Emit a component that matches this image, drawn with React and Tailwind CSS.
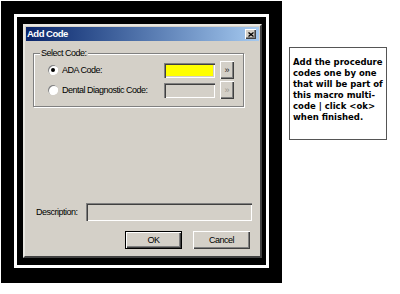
import React from 'react';

const sans = "font-['Liberation_Sans',Arial,sans-serif]";
const label = 'text-[9px] leading-[12px] tracking-[-0.5px] whitespace-nowrap text-black';

const raised = 'shadow-[inset_1px_1px_0_#ffffff,inset_-1px_-1px_0_#404040,inset_-2px_-2px_0_#808080]';
const sunken = 'shadow-[inset_1px_1px_0_#808080,inset_2px_2px_0_#404040,inset_-1px_-1px_0_#ffffff,inset_-2px_-2px_0_#d4d0c8]';

const Radio = ({ checked }) => (
  <span className="w-[10px] h-[10px] rounded-full bg-white shrink-0 flex items-center justify-center shadow-[inset_1px_1px_0_#808080,inset_-1px_-1px_0_#ffffff]">
    {checked && <span className="w-[4px] h-[4px] rounded-full bg-black" />}
  </span>
);

const CodeRow = ({ text, checked, yellow, disabled }) => (
  <div className="flex items-center h-[18px] pl-[14px]">
    <Radio checked={checked} />
    <span className={`ml-[4px] w-[102px] ${label}`}>{text}</span>
    <div className={`w-[51px] h-[15px] shrink-0 ${yellow ? 'bg-[#ffff00]' : 'bg-[#d4d0c8]'} ${sunken}`} />
    <button
      className={`ml-[5px] w-[14px] h-[18px] shrink-0 bg-[#d4d0c8] ${raised} flex items-center justify-center text-[9px] leading-none ${disabled ? 'text-[#9a978f]' : 'text-[#222]'}`}
    >
      »
    </button>
  </div>
);

export default function App() {
  return (
    <div className={`w-[400px] h-[294px] bg-white flex items-start pt-[1px] pl-[1px] overflow-hidden ${sans}`}>
      {/* picture frame */}
      <div className="w-[281px] h-[282px] bg-black pt-[13px] pl-[13px] pr-[13px] pb-[15px] shrink-0">
        <div className="h-full border-[3px] border-white pt-[7px] pl-[6px] pr-[4px] pb-[7px]">
          {/* dialog */}
          <div className="h-full flex flex-col bg-[#d4d0c8] border-2 border-t-[#e8e6e0] border-l-[#e8e6e0] border-r-[#404040] border-b-[#404040] p-[1px]">
            <div className="h-[14px] bg-linear-to-r from-[#0a246a] to-[#a6caf0] flex items-center justify-between pl-[1px] pr-[3px]">
              <span className="text-white font-bold text-[9.5px] tracking-[-0.5px] leading-none">Add Code</span>
              <span className={`w-[11px] h-[10px] bg-[#d4d0c8] ${raised} flex items-center justify-center`}>
                <svg width="6" height="5" viewBox="0 0 6 5">
                  <path d="M0.5 0.5 L5.5 4.5 M5.5 0.5 L0.5 4.5" stroke="#000" strokeWidth="1.3" />
                </svg>
              </span>
            </div>

            {/* Select Code group */}
            <div className="relative ml-[7px] mt-[12px] w-[211px] h-[54px] border border-[#808080] shadow-[1px_1px_0_#ffffff,inset_1px_1px_0_#ffffff] pt-[7px] flex flex-col gap-[2px]">
              <span className={`absolute left-[6px] -top-[7px] px-[1px] bg-[#d4d0c8] ${label}`}>
                Select Code:
              </span>
              <CodeRow text="ADA Code:" checked yellow />
              <CodeRow text="Dental Diagnostic Code:" disabled />
            </div>

            {/* Description */}
            <div className="flex items-center mt-[96px] ml-[10px]">
              <span className={`w-[50px] ${label}`}>Description:</span>
              <div className={`w-[166px] h-[18px] bg-[#d4d0c8] ${sunken}`} />
            </div>

            {/* Buttons */}
            <div className="flex justify-end gap-[11px] mt-[10px] pr-[9px]">
              <button className={`w-[57px] h-[18px] border border-black bg-[#d4d0c8] ${raised} ${label}`}>
                OK
              </button>
              <button className={`w-[57px] h-[18px] bg-[#d4d0c8] ${raised} ${label}`}>
                Cancel
              </button>
            </div>
          </div>
        </div>
      </div>

      {/* instruction note */}
      <div className="ml-[7px] mt-[46px] w-[98px] h-[93px] shrink-0 border border-[#555555] bg-white pl-[3px] pt-[9px] font-['DejaVu_Sans',Verdana,sans-serif] font-bold text-[8.5px] leading-[11px] text-black">
        Add the procedure
        <br />
        codes one by one
        <br />
        that will be part of
        <br />
        this macro multi-
        <br />
        code | click &lt;ok&gt;
        <br />
        when finished.
      </div>
    </div>
  );
}
